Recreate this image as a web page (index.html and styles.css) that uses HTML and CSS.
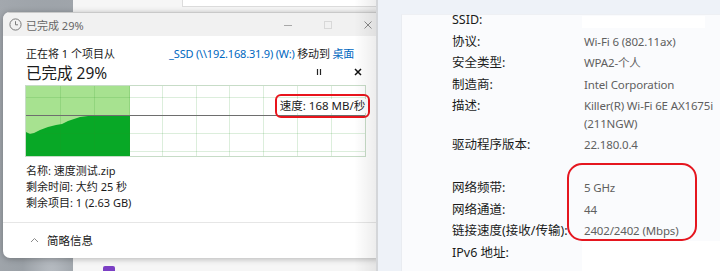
FILE: index.html
```html
<!DOCTYPE html>
<html lang="zh-CN">
<head>
    <meta charset="UTF-8">
    <meta name="viewport" content="width=device-width, initial-scale=1.0">
    <title>复制速度</title>
    <link rel="stylesheet" href="styles.css">
</head>
<body>
    <div class="screen">
        <section class="desktop">
            <div class="wallpaper"></div>
            <div class="back-window">
                <div class="back-box"></div>
                <div class="back-icon"></div>
            </div>

            <!-- copy progress dialog -->
            <div class="dialog">
                <div class="titlebar">
                    <svg class="clock" width="13" height="13" viewBox="0 0 13 13">
                        <circle cx="6.5" cy="6.5" r="5.6" fill="none" stroke="#7a7a7a" stroke-width="1"/>
                        <path d="M6.5 3.2V6.8H9" fill="none" stroke="#7a7a7a" stroke-width="1"/>
                    </svg>
                    <span class="title-text">已完成 29%</span>
                    <div class="title-controls">
                        <svg width="8" height="8" viewBox="0 0 8 8"><path d="M0 4.5H8" stroke="#a8a8a8" stroke-width="1"/></svg>
                        <svg width="8" height="8" viewBox="0 0 8 8"><rect x="0.5" y="0.5" width="7" height="7" fill="none" stroke="#d8d8d8" stroke-width="1"/></svg>
                        <svg width="8" height="8" viewBox="0 0 8 8"><path d="M0.5 0.5L7.5 7.5M7.5 0.5L0.5 7.5" stroke="#8a8a8a" stroke-width="1"/></svg>
                    </div>
                </div>

                <div class="dialog-body">
                    <div class="line-from">
                        <span>正在将 1 个项目从</span>
                        <span class="route"><span class="link">_SSD (\\192.168.31.9) (W:)</span> 移动到 <span class="link">桌面</span></span>
                    </div>
                    <div class="line-big">
                        <span class="big">已完成 29%</span>
                        <div class="big-controls">
                            <svg width="8" height="8" viewBox="0 0 8 8"><path d="M2.5 1V7M5.5 1V7" stroke="#222" stroke-width="1.2"/></svg>
                            <svg width="8" height="8" viewBox="0 0 8 8"><path d="M1 1L7 7M7 1L1 7" stroke="#111" stroke-width="1.5"/></svg>
                        </div>
                    </div>

                    <div class="graph">
                        <svg width="339" height="70" viewBox="0 0 339 70">
                            <rect x="0" y="0" width="104" height="70" fill="#a7e290"/>
                            <polygon points="0,46 4,48 8,47 14,44 22,41 30,39 36,38 42,35 48,33 54,31 62,30 75,29.6 90,30 104,30 104,70 0,70" fill="#08a826"/>
                            <g stroke="rgba(40,150,40,0.16)" stroke-width="1">
                                <path d="M34.5 0V70M68.5 0V70M103.5 0V70M136.5 0V70M170.5 0V70M203.5 0V70M237.5 0V70M271.5 0V70M305.5 0V70"/>
                                <path d="M0 11.5H339M0 47.5H339M0 65.5H339"/>
                            </g>
                            <path d="M0 29.5H339" stroke="#6e6e6e" stroke-width="1.2"/>
                        </svg>
                        <div class="speed-tag"><span>速度: 168 MB/秒</span></div>
                    </div>

                    <div class="details">
                        <div>名称: 速度测试.zip</div>
                        <div>剩余时间: 大约 25 秒</div>
                        <div>剩余项目: 1 (2.63 GB)</div>
                    </div>
                </div>

                <div class="dialog-footer">
                    <svg width="9" height="6" viewBox="0 0 9 6"><path d="M1 5L4.5 1.5L8 5" fill="none" stroke="#8a8a8a" stroke-width="1"/></svg>
                    <span>简略信息</span>
                </div>
            </div>
            <div class="edge-shade"></div>
        </section>

        <!-- wifi properties -->
        <section class="settings">
            <div class="card">
                <div class="props">
                    <div class="row"><span class="key">SSID:</span><span class="val blank-short"></span></div>
                    <div class="row"><span class="key">协议:</span><span class="val">Wi-Fi 6 (802.11ax)</span></div>
                    <div class="row"><span class="key">安全类型:</span><span class="val">WPA2-个人</span></div>
                    <div class="row"><span class="key">制造商:</span><span class="val">Intel Corporation</span></div>
                    <div class="row"><span class="key">描述:</span><span class="val">Killer(R) Wi-Fi 6E AX1675i<br>(211NGW)</span></div>
                    <div class="row"><span class="key">驱动程序版本:</span><span class="val">22.180.0.4</span></div>
                    <div class="row empty"></div>
                    <div class="row"><span class="key">网络频带:</span><span class="val">5 GHz</span></div>
                    <div class="row"><span class="key">网络通道:</span><span class="val">44</span></div>
                    <div class="row"><span class="key">链接速度(接收/传输):</span><span class="val">2402/2402 (Mbps)</span></div>
                    <div class="row"><span class="key">IPv6 地址:</span><span class="val blank-wide"></span></div>
                </div>
                <div class="mark"></div>
            </div>
        </section>
    </div>
</body>
</html>
```

FILE: styles.css
```css
* {
    margin: 0;
    padding: 0;
    box-sizing: border-box;
}

body {
    width: 720px;
    height: 271px;
    overflow: hidden;
    font-family: "Noto Sans", "Noto Sans CJK SC", sans-serif;
    color: #1b1b1b;
    background-color: #eef2f8;
}

.screen {
    display: flex;
    height: 271px;
}

/* left: desktop with the copy dialog */
.desktop {
    position: relative;
    width: 378px;
    height: 271px;
    overflow: hidden;
    border-right: 2px solid #d4d6d9;
    background-color: #f4f4f4;
}

.wallpaper {
    position: absolute;
    left: 0;
    top: 0;
    width: 73px;
    height: 271px;
    background: radial-gradient(ellipse at 70% 110%, #b9bec4 0, #9aa0a6 40%, #a3a8ae 100%);
}

.back-window {
    position: absolute;
    left: 73px;
    top: 0;
    right: 0;
    bottom: 0;
    background-color: #f6f6f6;
}

.back-box {
    position: absolute;
    left: 109px;
    top: -4px;
    width: 300px;
    height: 11px;
    border: 1px solid #dcdcdc;
    background-color: #fff;
}

.back-icon {
    position: absolute;
    left: 30px;
    top: 266px;
    width: 12px;
    height: 10px;
    background-color: #7b3fc4;
    border-radius: 2px 2px 0 0;
}

.dialog {
    position: absolute;
    left: 3px;
    top: 12px;
    width: 380px;
    height: 246px;
    background-color: #fff;
    border-radius: 7px;
    box-shadow: 0 1px 6px rgba(0, 0, 0, 0.28);
    overflow: hidden;
    display: flex;
    flex-direction: column;
}

.titlebar {
    display: flex;
    align-items: center;
    height: 24px;
    padding-left: 6px;
    background-color: #f1f1f1;
    border-top: 1px solid #c9c9c9;
}

.clock {
    margin-right: 4px;
}

.title-text {
    font-size: 11px;
    color: #666;
}

.title-controls {
    display: flex;
    align-items: center;
    gap: 32px;
    margin-left: auto;
    margin-right: 11px;
}

.dialog-body {
    padding: 9px 18px 0 23px;
    font-size: 11px;
}

.line-from {
    display: flex;
    justify-content: space-between;
    line-height: 17px;
    padding-right: 11px;
}

.route {
    letter-spacing: -0.2px;
}

.link {
    color: #0067c0;
}

.line-big {
    display: flex;
    align-items: center;
    justify-content: space-between;
    height: 20px;
    padding-right: 3px;
}

.big {
    font-size: 15.5px;
}

.big-controls {
    display: flex;
    gap: 31px;
}

.graph {
    position: relative;
    width: 339px;
    height: 70px;
    margin-top: 4px;
    outline: 1px solid #c7dcc7;
}

.graph svg {
    display: block;
}

.speed-tag {
    position: absolute;
    left: 249px;
    top: 8px;
    width: 95px;
    height: 24px;
    border: 2.5px solid #e8141c;
    border-radius: 6px;
    display: flex;
    align-items: center;
    justify-content: center;
}

.speed-tag span {
    background-color: #fff;
    font-size: 11.5px;
    line-height: 14px;
    padding: 0 2px;
}

.details {
    margin-top: 7px;
    line-height: 16px;
}

.dialog-footer {
    display: flex;
    align-items: center;
    gap: 8px;
    margin-top: 11px;
    height: 35px;
    padding-left: 27px;
    border-top: 1px solid #e6e6e6;
    font-size: 11.5px;
}

.edge-shade {
    position: absolute;
    top: 0;
    right: 0;
    width: 22px;
    height: 271px;
    background: linear-gradient(to right, rgba(0, 0, 0, 0), rgba(0, 0, 0, 0.07));
}

/* right: wifi properties */
.settings {
    flex: 1;
    padding: 14px 0 0 23px;
    overflow: hidden;
}

.card {
    position: relative;
    height: 257px;
    background-color: #fafbfd;
    border-left: 1px solid #e9ecf1;
    border-top: 1px solid #eef0f4;
    overflow: hidden;
}

.props {
    margin-top: -6px;
    padding-left: 50px;
    font-size: 12.5px;
}

.row {
    display: flex;
    padding: 2px 0;
    line-height: 17.5px;
}

.row.empty {
    height: 21.5px;
}

.key {
    width: 132px;
    flex-shrink: 0;
}

.val {
    color: #5f5f5f;
    white-space: nowrap;
    font-size: 11.5px;
    letter-spacing: -0.15px;
}

.blank-short {
    width: 123px;
    height: 12px;
    margin-top: 5px;
    margin-left: -2px;
    background-color: #fff;
}

.blank-wide {
    width: 160px;
    height: 40px;
    margin-left: -2px;
    margin-top: -3px;
    background-color: #fff;
}

.mark {
    position: absolute;
    left: 165px;
    top: 148px;
    width: 130px;
    height: 78px;
    border: 2.5px solid #e5161f;
    border-radius: 15px;
}
```
